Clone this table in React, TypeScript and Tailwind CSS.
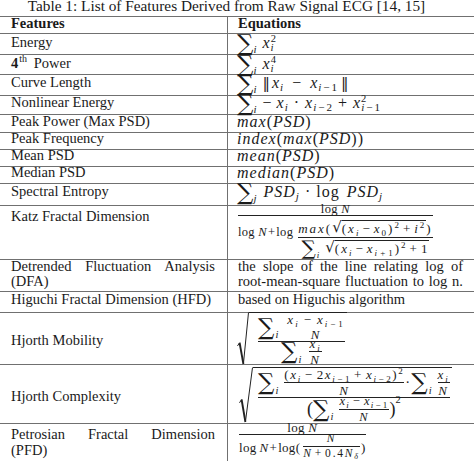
import React from "react";

type N = React.ReactNode;

const Sb = ({ children, c = "text-[11px] align-[-3px]" }: { children: N; c?: string }) => (
  <span className={`leading-[0] not-italic ${c}`}>{children}</span>
);
const Sp = ({ children, c = "text-[10.5px] align-[6px]" }: { children: N; c?: string }) => (
  <span className={`leading-[0] not-italic ${c}`}>{children}</span>
);
const sm = <span className="mx-[1px]">−</span>;
const sp = <span className="mx-[1px]">+</span>;

const SumI = ({ sub }: { sub: N }) => (
  <>
    <span className="leading-[0] text-[23px] tracking-normal font-['DejaVu_Serif',serif] align-[-3px]">∑</span>
    <Sb c="text-[11px] align-[-5px] mr-[5px]">
      <i>{sub}</i>
    </Sb>
  </>
);

const SumF = ({ sub, big = "text-[23px]", subc = "text-[10.5px]" }: { sub: N; big?: string; subc?: string }) => (
  <span className="inline-flex items-end whitespace-nowrap tracking-normal">
    <span className={`${big} leading-none font-['DejaVu_Serif',serif]`}>∑</span>
    <i className={`${subc} leading-none mb-[-2px] ml-[1px] mr-[3px]`}>{sub}</i>
  </span>
);

const Op = ({ children, c = "mx-[3px]" }: { children: N; c?: string }) => <span className={c}>{children}</span>;

const Frac = ({ num, den, c = "", nc = "", dc = "" }: { num: N; den: N; c?: string; nc?: string; dc?: string }) => (
  <span className={`inline-flex flex-col items-stretch whitespace-nowrap ${c}`}>
    <span className={`flex justify-center leading-none ${nc}`}>{num}</span>
    <span className={`flex justify-center border-t border-[#222] leading-none ${dc}`}>{den}</span>
  </span>
);

const Sq = ({ children, g = "text-[12px]", c = "" }: { children: N; g?: string; c?: string }) => (
  <span className={`inline-flex items-end ${c}`}>
    <span className={`${g} leading-none tracking-normal font-['DejaVu_Serif',serif]`}>√</span>
    <span className="border-t border-[#222] leading-none pt-[1px]">{children}</span>
  </span>
);

const Radical = ({ w, h }: { w: number; h: number }) => (
  <svg width={w} height={h} viewBox={`0 0 ${w} ${h}`} className="shrink-0">
    <path d={`M0.5 ${h * 0.64} L2.6 ${h * 0.58}`} stroke="#222" strokeWidth="1" fill="none" />
    <path d={`M2.6 ${h * 0.58} L6.4 ${h - 1}`} stroke="#222" strokeWidth="1.9" fill="none" />
    <path d={`M6.4 ${h - 1} L${w - 0.5} 0.5`} stroke="#222" strokeWidth="1" fill="none" />
  </svg>
);

const BigSqrt = ({ w, h, children }: { w: number; h: number; children: N }) => (
  <span className="inline-flex items-start">
    <Radical w={w} h={h} />
    <span className="border-t border-[#222] pr-[2px]">{children}</span>
  </span>
);

function Row({ h, l, r, lc = "", rc = "", last = false }: { h: string; l: N; r: N; lc?: string; rc?: string; last?: boolean }) {
  return (
    <div className={`flex ${h} ${last ? "" : "border-b border-[#707070]"}`}>
      <div className={`w-[228px] shrink-0 border-r border-[#707070] pl-[11px] pr-[12px] ${lc}`}>{l}</div>
      <div className={`min-w-0 flex-1 pl-[9px] pr-[11px] ${rc}`}>{r}</div>
    </div>
  );
}

const x = <i>x</i>;

const sx = (s: N, c = "text-[9px] align-[-3px]") => (
  <>
    <i>x</i>
    <Sb c={c}>{s}</Sb>
  </>
);
const im1 = (
  <>
    <i>i</i>
    {sm}1
  </>
);
const im2 = (
  <>
    <i>i</i>
    {sm}2
  </>
);
const ip1 = (
  <>
    <i>i</i>
    {sp}1
  </>
);
const ii = <i>i</i>;

const MATH = "text-[16px] tracking-[1px] whitespace-nowrap";
const SMALL = "text-[13px] tracking-[2px]";

export default function App() {
  return (
    <div className="w-[474px] h-[461px] overflow-hidden bg-white text-[#1a1a1a] font-['Liberation_Serif','Times_New_Roman',serif] text-[14.5px]">
      <div className="h-[16px] pr-[21px] text-center text-[15.3px] leading-[12px] whitespace-nowrap">
        Table 1: List of Features Derived from Raw Signal ECG [14, 15]
      </div>
      <div className="border-t border-[#707070]">
        <Row h="h-[17px]" lc="leading-[13px] font-bold" rc="leading-[13px] font-bold pl-[10px]" l="Features" r="Equations" />
        <Row
          h="h-[21px]"
          lc="leading-[15px] pt-[1px]"
          rc={`leading-[15px] pt-[1px] ${MATH}`}
          l="Energy"
          r={
            <>
              <SumI sub="i" />
              {x}
              <Sb>{ii}</Sb>
              <Sp c="text-[10.5px] align-[6px] -ml-[4px]">2</Sp>
            </>
          }
        />
        <Row
          h="h-[20px]"
          lc="leading-[15px] pt-[1px]"
          rc={`leading-[15px] pt-[1px] ${MATH}`}
          l={
            <>
              <b>4</b>
              <Sp c="text-[10px] align-[6px] italic ml-[1px] mr-[3px]">th</Sp> Power
            </>
          }
          r={
            <>
              <SumI sub="i" />
              {x}
              <Sb>{ii}</Sb>
              <Sp c="text-[10.5px] align-[6px] -ml-[4px]">4</Sp>
            </>
          }
        />
        <Row
          h="h-[21px]"
          lc="leading-[15px]"
          rc={`leading-[15px] ${MATH}`}
          l="Curve Length"
          r={
            <>
              <SumI sub="i" />
              <span className="font-['DejaVu_Serif',serif] text-[15px] tracking-normal mr-[2px]">‖</span>
              {x}
              <Sb>{ii}</Sb>
              <Op c="mx-[8px]">−</Op>
              {x}
              <Sb>{im1}</Sb>
              <span className="font-['DejaVu_Serif',serif] text-[15px] tracking-normal ml-[3px]">‖</span>
            </>
          }
        />
        <Row
          h="h-[19px]"
          lc="leading-[13px]"
          rc={`leading-[13px] ${MATH}`}
          l="Nonlinear Energy"
          r={
            <>
              <SumI sub="i" />
              <Op c="mr-[4px]">−</Op>
              {x}
              <Sb>{ii}</Sb>
              <Op c="mx-[5px]">·</Op>
              {x}
              <Sb>{im2}</Sb>
              <Op c="mx-[5px]">+</Op>
              {x}
              <Sp>2</Sp>
              <Sb c="text-[11px] align-[-3px] -ml-[6px]">{im1}</Sb>
            </>
          }
        />
        <Row
          h="h-[18px]"
          lc="leading-[13px]"
          rc={`leading-[13px] ${MATH}`}
          l="Peak Power (Max PSD)"
          r={
            <>
              <i>max</i>(<i>PSD</i>)
            </>
          }
        />
        <Row
          h="h-[17px]"
          lc="leading-[11px]"
          rc={`leading-[11px] ${MATH}`}
          l="Peak Frequency"
          r={
            <>
              <i>index</i>(<i>max</i>(<i>PSD</i>))
            </>
          }
        />
        <Row
          h="h-[17px]"
          lc="leading-[11px]"
          rc={`leading-[11px] ${MATH}`}
          l="Mean PSD"
          r={
            <>
              <i>mean</i>(<i>PSD</i>)
            </>
          }
        />
        <Row
          h="h-[17px]"
          lc="leading-[11px]"
          rc={`leading-[11px] ${MATH}`}
          l="Median PSD"
          r={
            <>
              <i>median</i>(<i>PSD</i>)
            </>
          }
        />
        <Row
          h="h-[22px]"
          lc="leading-[15px]"
          rc={`leading-[15px] ${MATH}`}
          l="Spectral Entropy"
          r={
            <>
              <SumI sub="j" />
              <span className="ml-[1px]">
                <i>PSD</i>
              </span>
              <Sb>
                <i>j</i>
              </Sb>
              <Op c="mx-[5px]">·</Op>log <i className="ml-[2px]">PSD</i>
              <Sb>
                <i>j</i>
              </Sb>
            </>
          }
        />
        <Row
          h="h-[54px]"
          lc="leading-[15px] pt-[3px]"
          rc="flex items-start pl-[10px]"
          l="Katz Fractal Dimension"
          r={
            <Frac
              nc="h-[9px] items-end text-[12.5px] tracking-[0.3px]"
              num={
                <span>
                  log <i>N</i>
                </span>
              }
              den={
                <span className="inline-flex items-center text-[12.5px] tracking-[0.3px]">
                  <span className="mr-[5px] mb-[9px] whitespace-nowrap">
                    log <i>N</i>
                    {sp}log
                  </span>
                  <Frac
                    nc={`h-[21px] items-end pb-[2px] ${SMALL}`}
                    dc={`h-[20px] items-start ${SMALL}`}
                    num={
                      <span className="inline-flex items-end whitespace-nowrap">
                        <i>max</i>(
                        <Sq g="text-[15px]">
                          ({sx(ii)}
                          <Op c="mx-[2px]">−</Op>
                          {sx("0")})<Sp c="text-[9px] align-[5px]">2</Sp>
                          <Op c="mx-[2px]">+</Op>
                          <i>i</i>
                          <Sp c="text-[9px] align-[5px]">2</Sp>
                        </Sq>
                        )
                      </span>
                    }
                    den={
                      <span className="inline-flex items-end">
                        <SumF sub="i" big="text-[20px]" subc="text-[9px]" />
                        <Sq g="text-[15px]" c="ml-[3px] mb-[3px]">
                          ({sx(ii)}
                          <Op c="mx-[2px]">−</Op>
                          {sx(ip1)})<Sp c="text-[9px] align-[5px]">2</Sp>
                          <Op c="mx-[2px]">+</Op>1
                        </Sq>
                      </span>
                    }
                  />
                </span>
              }
            />
          }
        />
        <Row
          h="h-[32px]"
          lc="leading-[15px]"
          rc="leading-[15px]"
          l={<div className="-mt-[1px] text-justify">Detrended Fluctuation Analysis (DFA)</div>}
          r={
            <div className="-mt-[1px] pl-[1px] text-justify [text-align-last:justify]">
              the slope of the line relating log of
              <br />
              root-mean-square fluctuation to log n.
            </div>
          }
        />
        <Row h="h-[21px]" lc="leading-[15px]" rc="leading-[15px] pl-[10px]" l="Higuchi Fractal Dimension (HFD)" r="based on Higuchis algorithm" />
        <Row
          h="h-[52px]"
          lc="leading-[15px] pt-[20px]"
          rc="flex items-start -mt-[1px]"
          l="Hjorth Mobility"
          r={
            <BigSqrt w={12} h={53}>
              <Frac
                c="ml-[9px]"
                nc="h-[28px] items-center"
                dc="h-[20px] items-center"
                num={
                  <span className="inline-flex items-center">
                    <SumF sub="i" />
                    <Frac
                      c={`${SMALL} ml-[6px]`}
                      nc="pb-[1px]"
                      dc="border-transparent"
                      num={
                        <span>
                          {sx(ii)}
                          <Op c="mx-[4px]">−</Op>
                          {sx(im1)}
                        </span>
                      }
                      den={<i>N</i>}
                    />
                  </span>
                }
                den={
                  <span className="inline-flex items-center">
                    <SumF sub="i" />
                    <Frac c={`${SMALL} ml-[5px]`} nc="pb-[1px]" dc="pt-[1px]" num={<span>{sx(ii)}</span>} den={<i>N</i>} />
                  </span>
                }
              />
            </BigSqrt>
          }
        />
        <Row
          h="h-[59px]"
          lc="leading-[15px] pt-[24px]"
          rc="flex items-start pt-[2px] pl-[11px]"
          l="Hjorth Complexity"
          r={
            <BigSqrt w={14} h={56}>
              <Frac
                c="ml-[5px]"
                nc="h-[29px] items-center"
                dc="h-[23px] items-center"
                num={
                  <span className="inline-flex items-center">
                    <SumF sub="i" />
                    <Frac
                      c="text-[13px] tracking-[1.6px] ml-[3px]"
                      nc="pb-[1px]"
                      dc="pt-[1px]"
                      num={
                        <span>
                          ({sx(ii)}
                          <Op c="mx-[3px]">−</Op>2{sx(im1)}
                          <Op c="mx-[3px]">+</Op>
                          {sx(im2)})<Sp c="text-[9px] align-[5px]">2</Sp>
                        </span>
                      }
                      den={<i>N</i>}
                    />
                    <Op c="mx-[1px]">·</Op>
                    <SumF sub="i" />
                    <Frac c={`${SMALL} ml-[3px]`} nc="pb-[1px]" dc="pt-[1px]" num={<span>{sx(ii)}</span>} den={<i>N</i>} />
                  </span>
                }
                den={
                  <span className="inline-flex items-center text-[15px]">
                    <span className="text-[18px]">(</span>
                    <SumF sub="i" />
                    <Frac
                      c="text-[12.5px] tracking-[1.2px] ml-[3px]"
                      nc="pb-[1px]"
                      dc="pt-[1px]"
                      num={
                        <span>
                          {sx(ii)}
                          <Op c="mx-[3px]">−</Op>
                          {sx(im1)}
                        </span>
                      }
                      den={<i>N</i>}
                    />
                    <span className="text-[18px] ml-[1px]">)</span>
                    <span className="text-[10.5px] self-start">2</span>
                  </span>
                }
              />
            </BigSqrt>
          }
        />
        <Row
          h="h-[37px]"
          last
          lc="leading-[16px] pt-[2px]"
          rc="flex items-start pl-[11px]"
          l={<div className="text-justify">Petrosian Fractal Dimension (PFD)</div>}
          r={
            <Frac
              nc="h-[10px] items-end text-[13px] tracking-[0.3px]"
              num={
                <span>
                  log <i>N</i>
                </span>
              }
              den={
                <span className="inline-flex items-center text-[13px] tracking-[0.3px]">
                  log <i className="ml-[3px]">N</i>
                  <Op c="mx-[1px]">+</Op>log(
                  <Frac
                    c="text-[11.5px] tracking-[1.8px] -mt-[2px] ml-[3px]"
                    nc="pb-[1px]"
                    dc="pt-[1px]"
                    num={<i>N</i>}
                    den={
                      <span>
                        <i>N</i>
                        <Op c="mx-[2px]">+</Op>0.4<i>N</i>
                        <Sb c="text-[8px] align-[-2px]">
                          <i>δ</i>
                        </Sb>
                      </span>
                    }
                  />
                  <span className="ml-[1px]">)</span>
                </span>
              }
            />
          }
        />
      </div>
    </div>
  );
}
